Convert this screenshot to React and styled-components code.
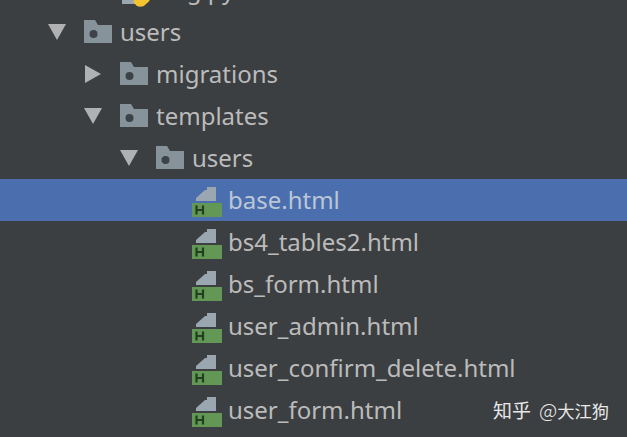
import React from "react";
import styled, { createGlobalStyle } from "styled-components";

const Global = createGlobalStyle`
  html, body { margin: 0; padding: 0; background: #3c3f41; }
  body { width: 627px; height: 437px; overflow: hidden; }
`;

const Panel = styled.div`
  position: relative;
  width: 627px;
  height: 437px;
  overflow: hidden;
  background: #3c3f41;
  font-family: "Noto Sans", "Noto Sans CJK SC", sans-serif;
`;

const Tree = styled.ul`
  list-style: none;
  margin: -31px 0 0;
  padding: 0;
`;

const Row = styled.li`
  display: flex;
  align-items: center;
  height: 42px;
  padding-left: ${(p) => p.$indent}px;
  background: ${(p) => (p.$selected ? "#4b6eaf" : "transparent")};
`;

const ArrowSlot = styled.span`
  display: flex;
  width: 36px;
  flex: none;
`;

const IconSlot = styled.span`
  display: flex;
  width: 36px;
  height: 24px;
  flex: none;
`;

const Label = styled.span`
  color: ${(p) => (p.$selected ? "#bbc7d6" : "#bbbbbb")};
  font-size: 24px;
  line-height: 42px;
  white-space: nowrap;
`;

const Watermark = styled.div`
  position: absolute;
  right: 18px;
  top: 398px;
  color: #e8e8e8;
  font-family: "Noto Sans CJK SC", sans-serif;
  font-size: 17.3px;
  line-height: 24px;
  white-space: nowrap;
`;

const Brand = styled.span`
  font-size: 19px;
  margin-right: 8px;
`;

const At = styled.span`
  font-size: 20px;
  font-weight: 300;
`;

const FileSvg = styled.svg`
  margin-top: -1px;
`;

const PySvg = styled.svg`
  margin-top: 5px;
`;

const Arrow = ({ open }) => (
  <svg width="18" height="18" viewBox="0 0 18 18">
    {open ? <path d="M0 1H18L9 17Z" fill="#afb1b3" /> : <path d="M1 0L17 9L1 18Z" fill="#afb1b3" />}
  </svg>
);

const Folder = () => (
  <svg width="28" height="24" viewBox="0 0 28 24">
    <path d="M0 0H11L14 5H28V23H0Z" fill="#87939a" />
    <circle cx="9.5" cy="14" r="4" fill="#3c4248" />
  </svg>
);

const HtmlFile = () => (
  <FileSvg width="30" height="30" viewBox="0 0 30 30">
    <path d="M4 14V11L13 3H15V0H24V14Z" fill="#9aa7b0" />
    <rect x="0" y="16" width="30" height="14" fill="#629755" />
    <path d="M4.5 18.5V27.5M11 18.5V27.5M4.5 23H11" stroke="#20401f" strokeWidth="2.2" fill="none" />
  </FileSvg>
);

const Python = () => (
  <PySvg width="30" height="24" viewBox="0 0 30 24">
    <rect x="0" y="0" width="13" height="21" fill="#9aa7b0" />
    <path d="M12 10H24V16H12Z" fill="#3f77a8" />
    <path d="M11 18C14 16 18 16 20 15C23 14 25 14 28 15C28 19 25 20 24 21C21 25 15 24 14 22C13 21 12 20 11 18Z" fill="#f4c430" />
  </PySvg>
);

const rows = [
  { indent: 122, icon: "py", name: "img.py" },
  { indent: 48, arrow: "open", icon: "folder", name: "users" },
  { indent: 84, arrow: "closed", icon: "folder", name: "migrations" },
  { indent: 84, arrow: "open", icon: "folder", name: "templates" },
  { indent: 120, arrow: "open", icon: "folder", name: "users" },
  { indent: 192, icon: "html", name: "base.html", selected: true },
  { indent: 192, icon: "html", name: "bs4_tables2.html" },
  { indent: 192, icon: "html", name: "bs_form.html" },
  { indent: 192, icon: "html", name: "user_admin.html" },
  { indent: 192, icon: "html", name: "user_confirm_delete.html" },
  { indent: 192, icon: "html", name: "user_form.html" },
];

const icons = { folder: Folder, html: HtmlFile, py: Python };

export default function App() {
  return (
    <Panel>
      <Global />
      <Tree>
        {rows.map((r) => {
          const Icon = icons[r.icon];
          return (
            <Row key={r.indent + r.name} $indent={r.indent} $selected={r.selected}>
              {r.arrow && (
                <ArrowSlot>
                  <Arrow open={r.arrow === "open"} />
                </ArrowSlot>
              )}
              <IconSlot>
                <Icon />
              </IconSlot>
              <Label $selected={r.selected}>{r.name}</Label>
            </Row>
          );
        })}
      </Tree>
      <Watermark>
        <Brand>知乎</Brand>
        <At>@</At>大江狗
      </Watermark>
    </Panel>
  );
}
